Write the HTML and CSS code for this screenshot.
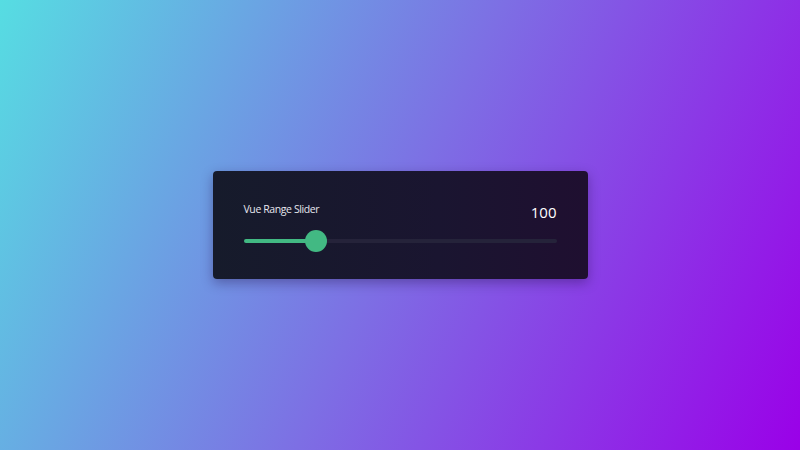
FILE: index.html
```html
<!DOCTYPE html>
<html lang="en">
<head>
    <meta charset="UTF-8">
    <meta name="viewport" content="width=device-width, initial-scale=1.0">
    <title>Vue Range Slider</title>
    <link rel="stylesheet" href="styles.css">
</head>
<body>

    <div class="card">
        <div class="card-head">
            <span class="label">Vue Range Slider</span>
            <span class="value">100</span>
        </div>
        <input class="slider" type="range" min="0" max="470" value="100" style="--fill: 23%">
    </div>

</body>
</html>
```

FILE: styles.css
```css
body {
    font-family: "Open Sans", "Noto Sans", sans-serif;
    background: linear-gradient(115deg, #56dde2, #7d6fe4 50%, #9a00e8);
    height: 100vh;
    display: flex;
    justify-content: center;
    align-items: center;
    margin: 0;
}

.card {
    width: 375px;
    box-sizing: border-box;
    padding: 31px 31px 27px;
    background: linear-gradient(90deg, #161b2b, #1a1530 60%, #1f0f30);
    border-radius: 4px;
    box-shadow: 0 4px 12px rgba(30, 10, 60, 0.35);
}

.card-head {
    display: flex;
    justify-content: space-between;
    align-items: flex-start;
    color: #e6e6ee;
}

.label {
    font-size: 10.5px;
    letter-spacing: -0.4px;
}

.value {
    font-size: 15px;
    color: #fff;
}

/* track fill is driven by --fill */
.slider {
    -webkit-appearance: none;
    appearance: none;
    display: block;
    width: 100%;
    height: 22px;
    margin: 8px 0 0;
    background: transparent;
    outline: none;
}

.slider::-webkit-slider-runnable-track {
    height: 4px;
    border-radius: 2px;
    background: linear-gradient(90deg, #42b983 var(--fill), #25233a var(--fill));
}

.slider::-webkit-slider-thumb {
    -webkit-appearance: none;
    width: 22px;
    height: 22px;
    margin-top: -9px;
    border-radius: 50%;
    background: #42b983;
    border: none;
    cursor: pointer;
}
```
